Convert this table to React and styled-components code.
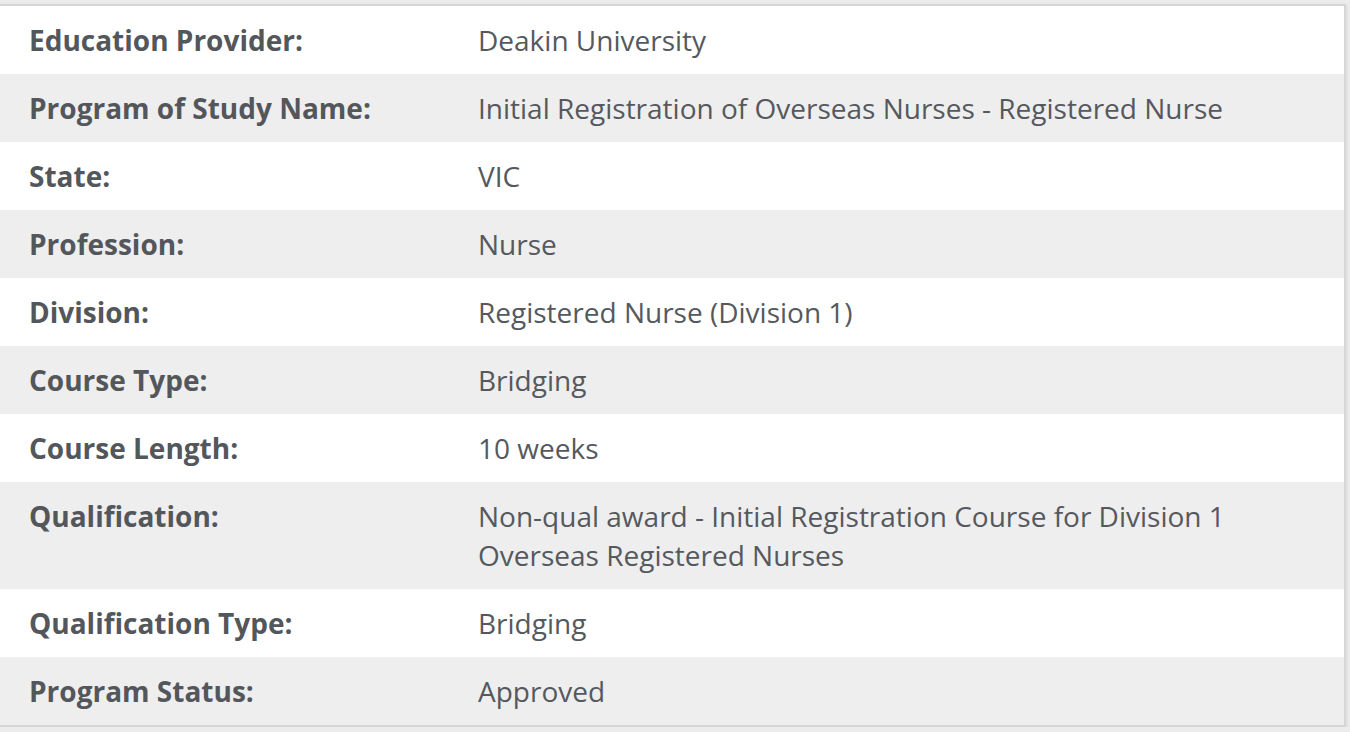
import styled, { createGlobalStyle } from "styled-components";

const ROWS = [
  { label: "Education Provider:", value: "Deakin University" },
  { label: "Program of Study Name:", value: "Initial Registration of Overseas Nurses - Registered Nurse" },
  { label: "State:", value: "VIC" },
  { label: "Profession:", value: "Nurse" },
  { label: "Division:", value: "Registered Nurse (Division 1)" },
  { label: "Course Type:", value: "Bridging" },
  { label: "Course Length:", value: "10 weeks" },
  { label: "Qualification:", value: "Non-qual award - Initial Registration Course for Division 1 Overseas Registered Nurses" },
  { label: "Qualification Type:", value: "Bridging" },
  { label: "Program Status:", value: "Approved" },
];

const GlobalStyle = createGlobalStyle`
  html, body {
    margin: 0;
    padding: 0;
    background: #ececec;
    overflow: hidden;
  }
  body {
    font-family: "Open Sans", "Noto Sans", sans-serif;
    -webkit-font-smoothing: antialiased;
  }
`;

const Page = styled.div`
  padding: 4px 4px 0 0;
`;

const Table = styled.div`
  display: grid;
  grid-template-columns: 478px 1fr;
  margin-left: -2px;
  border: 2px solid #d6d6d6;
  background: #fff;
  box-shadow: 1px 1px 3px rgba(0, 0, 0, 0.08);
`;

const Row = styled.div`
  display: contents;

  & > div {
    background: ${(p) => (p.$shaded ? "#eeeeee" : "#ffffff")};
  }
`;

const Label = styled.div`
  padding: 14.5px 0 14.5px 29px;
  font-size: 28px;
  line-height: 39px;
  font-weight: 700;
  color: #53575c;
`;

const Value = styled.div`
  padding: 14.5px 70px 14.5px 0;
  font-size: 28px;
  line-height: 39px;
  font-weight: 400;
  color: #55595e;
`;

export default function App() {
  return (
    <>
      <GlobalStyle />
      <Page>
        <Table>
          {ROWS.map((row, i) => (
            <Row key={row.label} $shaded={i % 2 === 1}>
              <Label>{row.label}</Label>
              <Value>{row.value}</Value>
            </Row>
          ))}
        </Table>
      </Page>
    </>
  );
}
